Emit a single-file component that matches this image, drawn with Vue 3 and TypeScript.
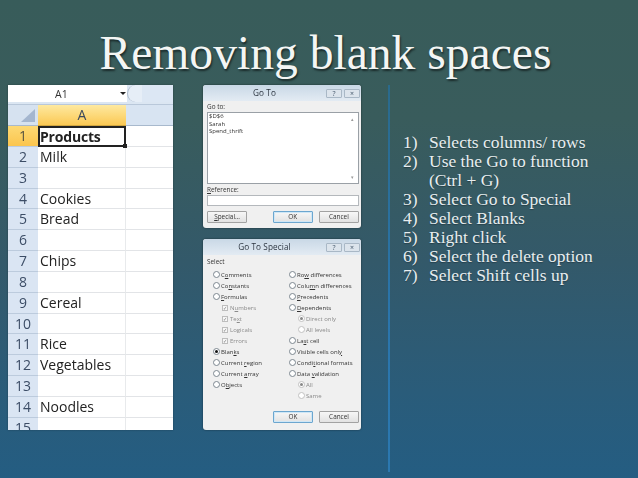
<script setup lang="ts">
interface Opt { label: string; kind: 'radio' | 'check' | 'none'; on?: boolean; sub?: boolean; off?: boolean }

const rows = ['Products', 'Milk', '', 'Cookies', 'Bread', '', 'Chips', '', 'Cereal', '', 'Rice', 'Vegetables', '', 'Noodles', '']

const steps = [
  { n: '1)', t: 'Selects columns/ rows' },
  { n: '2)', t: 'Use the Go to function' },
  { n: '', t: '(Ctrl + G)' },
  { n: '3)', t: 'Select Go to Special' },
  { n: '4)', t: 'Select Blanks' },
  { n: '5)', t: 'Right click' },
  { n: '6)', t: 'Select the delete option' },
  { n: '7)', t: 'Select Shift cells up' },
]

const left: Opt[] = [
  { label: 'C&omments', kind: 'radio' },
  { label: 'Co&nstants', kind: 'radio' },
  { label: '&Formulas', kind: 'radio' },
  { label: 'N&umbers', kind: 'check', on: true, sub: true, off: true },
  { label: 'Te&xt', kind: 'check', on: true, sub: true, off: true },
  { label: 'Lo&gicals', kind: 'check', on: true, sub: true, off: true },
  { label: 'Errors', kind: 'check', on: true, sub: true, off: true },
  { label: 'Blan&ks', kind: 'radio', on: true },
  { label: 'Current &region', kind: 'radio' },
  { label: 'Current &array', kind: 'radio' },
  { label: 'O&bjects', kind: 'radio' },
  { label: '', kind: 'none' },
]

const right: Opt[] = [
  { label: 'Ro&w differences', kind: 'radio' },
  { label: 'Colu&mn differences', kind: 'radio' },
  { label: '&Precedents', kind: 'radio' },
  { label: '&Dependents', kind: 'radio' },
  { label: 'Direct only', kind: 'radio', on: true, sub: true, off: true },
  { label: 'All levels', kind: 'radio', sub: true, off: true },
  { label: 'La&st cell', kind: 'radio' },
  { label: 'Visible cells onl&y', kind: 'radio' },
  { label: 'Condi&tional formats', kind: 'radio' },
  { label: 'Data &validation', kind: 'radio' },
  { label: 'All', kind: 'radio', on: true, sub: true, off: true },
  { label: 'Same', kind: 'radio', sub: true, off: true },
]

const special: Opt[] = left.flatMap((o, i) => [o, right[i]])

function parts(label: string): [string, string, string] {
  const i = label.indexOf('&')
  if (i < 0) return [label, '', '']
  return [label.slice(0, i), label.charAt(i + 1), label.slice(i + 2)]
}
</script>

<template>
  <div class="slide">
    <h1 class="title">Removing blank spaces</h1>
    <div class="content">
      <section class="sheet">
        <div class="formula">
          <div class="namebox"><span class="cellref">A1</span><span class="caret"></span></div>
          <div class="fxbar"><span class="fx"></span></div>
        </div>
        <div class="strip"></div>
        <div class="grid">
          <div class="corner"><svg width="17" height="15" viewBox="0 0 17 15"><path d="M15 1V14H1Z" fill="#a4b6cf" /></svg></div>
          <div class="colhead">A</div>
          <div class="colrest"></div>
          <template v-for="(r, i) in rows" :key="i">
            <div class="rowhead" :class="{ active: i === 0 }">{{ i + 1 }}</div>
            <div class="cell" :class="{ selected: i === 0 }">{{ r }}</div>
            <div class="cell rest"></div>
          </template>
        </div>
      </section>

      <div class="dialogs">
        <section class="dialog goto">
          <header class="dtitle">
            <span class="dname">Go To</span>
            <span class="wbtn help">?</span><span class="wbtn close">×</span>
          </header>
          <div class="dlabel first"><span>Go to:</span></div>
          <div class="listbox">
            <div class="entries"><div>$D$6</div><div>Sarah</div><div>Spend_thrift</div></div>
            <div class="scroll"><span>▴</span><span>▾</span></div>
          </div>
          <div class="dlabel"><u>R</u>eference:</div>
          <div class="input"></div>
          <div class="btns">
            <button class="btn"><u>S</u>pecial...</button>
            <span class="spacer"></span>
            <button class="btn default">OK</button>
            <button class="btn">Cancel</button>
          </div>
        </section>

        <section class="dialog gotospecial">
          <header class="dtitle">
            <span class="dname">Go To Special</span>
            <span class="wbtn help">?</span><span class="wbtn close">×</span>
          </header>
          <div class="dlabel sel">Select</div>
          <div class="options">
            <div v-for="(o, i) in special" :key="i" class="opt" :class="{ sub: o.sub, off: o.off }">
              <template v-if="o.kind !== 'none'">
                <span v-if="o.kind === 'radio'" class="radio" :class="{ on: o.on }"></span>
                <span v-else class="check">✓</span>
                <span>{{ parts(o.label)[0] }}<u>{{ parts(o.label)[1] }}</u>{{ parts(o.label)[2] }}</span>
              </template>
            </div>
          </div>
          <div class="btns right">
            <button class="btn default">OK</button>
            <button class="btn">Cancel</button>
          </div>
        </section>
      </div>

      <div class="rule"></div>

      <ol class="steps">
        <li v-for="(s, i) in steps" :key="i"><span class="num">{{ s.n }}</span><span>{{ s.t }}</span></li>
      </ol>
    </div>
  </div>
</template>

<style>
html, body { margin: 0; padding: 0; background: #2a5b70; }
</style>

<style scoped>
.slide {
  width: 638px;
  height: 478px;
  overflow: hidden;
  box-sizing: border-box;
  background: linear-gradient(180deg, #385c5a 0%, #395c5c 25%, #33596a 55%, #2a5c7a 82%, #245d82 100%);
}
.title {
  margin: 0;
  height: 85px;
  box-sizing: border-box;
  padding: 23px 0 0 13px;
  text-align: center;
  font: 400 47.6px/60px "Liberation Serif", serif;
  color: #f4f6f4;
  text-shadow: 1px 2px 2px rgba(0, 0, 0, .55);
  white-space: nowrap;
}
.content { display: flex; align-items: flex-start; }

/* spreadsheet */
.sheet {
  margin-left: 8px;
  width: 165px;
  height: 345px;
  flex: none;
  overflow: hidden;
  background: #fff;
  filter: blur(.4px);
  box-shadow: 0 0 2px rgba(0, 0, 0, .3);
  font-family: "Open Sans", sans-serif;
}
.formula { display: flex; height: 17px; background: #dce7f4; }
.namebox { width: 119px; background: #fff; display: flex; align-items: center; position: relative; }
.cellref { margin-left: 47px; font-size: 10.5px; color: #333; }
.caret { position: absolute; left: 112px; top: 7px; border: 3px solid transparent; border-top: 3px solid #222; border-bottom: 0; }
.fxbar { flex: 1; position: relative; }
.fx { position: absolute; left: 0; top: 0; width: 14px; height: 17px; border-left: 1px solid #aebccd; background: #e6eef7; border-radius: 10px 0 0 10px; }
.strip { height: 2px; background: #dbe6f2; border-bottom: 1px solid #b9c8da; }
.grid { display: grid; grid-template-columns: 30px 88px 47px; grid-template-rows: 21px; grid-auto-rows: 20.85px; }
.corner { background: #d6e2f0; border-bottom: 1px solid #a8b9cd; box-sizing: border-box; display: flex; align-items: center; justify-content: flex-end; padding-right: 1px; }
.colhead { background: linear-gradient(#fee9a0, #fbc954); border-bottom: 1px solid #d2a63f; box-sizing: border-box; text-align: center; color: #3c4a5c; font-size: 14px; line-height: 20px; }
.colrest { background: #d8e4f2; border-bottom: 1px solid #a8b9cd; box-sizing: border-box; }
.rowhead { background: #dae5f3; border-bottom: 1px solid #bccbdd; box-sizing: border-box; text-align: center; color: #3c4d66; font-size: 14px; line-height: 20px; }
.rowhead.active { background: linear-gradient(#fdd974, #fbc54e); color: #5a5440; }
.cell { box-sizing: border-box; border-bottom: 1px solid #e2e4e7; border-right: 1px solid #e8eaec; padding-left: 2px; font-size: 14px; line-height: 20px; color: #222; white-space: nowrap; }
.cell.rest { border-right: 0; }
.cell.selected { font-weight: 700; border: 2px solid #222; line-height: 17px; padding-left: 0; letter-spacing: -.2px; position: relative; }
.cell.selected::after { content: ""; position: absolute; right: -3px; bottom: -3px; width: 4px; height: 4px; background: #222; }

/* dialogs */
.dialogs { margin-left: 30px; width: 158px; flex: none; display: flex; flex-direction: column; gap: 11px; }
.dialog {
  box-sizing: border-box;
  background: #f0f0f0;
  border-radius: 3px;
  box-shadow: 0 0 2px rgba(0, 0, 0, .55);
  padding: 0 2px 5px;
  font-family: "Open Sans", sans-serif;
  font-size: 6.4px;
  line-height: 8px;
  color: #333;
  filter: blur(.45px);
  display: flex;
  flex-direction: column;
}
.goto { height: 143px; }
.gotospecial { height: 191px; padding-bottom: 7px; }
.dtitle { height: 16px; margin: 0 -2px; flex: none; background: linear-gradient(#c9d8e6, #e3ebf3); display: flex; align-items: center; border-radius: 3px 3px 0 0; }
.dname { flex: 1; text-align: center; font-size: 8.2px; letter-spacing: .1px; color: #2c3540; }
.wbtn { width: 16px; height: 9px; margin-right: 1px; box-sizing: border-box; border: 1px solid #a9b8c6; background: #dce4ec; font-size: 7px; line-height: 7px; text-align: center; color: #44566a; border-radius: 1px; }
.help { margin-right: 2px; }
.dlabel { margin: 1px 0 1px 2px; height: 8px; flex: none; }
.dlabel.first { margin-top: 2px; }
.listbox { height: 72px; margin: 0 0 1px 2px; width: 152px; box-sizing: border-box; border: 1px solid #9aa0a6; background: #fff; display: flex; flex: none; }
.entries { flex: 1; padding: 0 0 0 1px; line-height: 7.5px; font-size: 6px; }
.scroll { width: 7px; display: flex; flex-direction: column; justify-content: space-between; font-size: 5px; color: #999; line-height: 8px; padding: 2px 0; }
.input { height: 11px; width: 152px; margin-left: 2px; box-sizing: border-box; border: 1px solid #b4b8bc; background: #fff; flex: none; }
.btns { display: flex; gap: 6px; margin: 5px 0 0 2px; width: 152px; }
.btns.right { justify-content: flex-end; margin-top: auto; }
.spacer { width: 14px; }
.btn { width: 42px; height: 12px; padding: 0; box-sizing: border-box; border: 1px solid #a2a2a2; border-radius: 1px; background: linear-gradient(#f7f7f7, #e2e2e2); font: 6.4px/8px "Open Sans", sans-serif; color: #333; }
.gotospecial .btn { width: 40px; }
.btn.default { border-color: #6ca6cf; box-shadow: inset 0 0 0 1px #cfe7f6; }
.dlabel.sel { margin: 3px 0 3px 2px; }
.options { display: grid; grid-template-columns: 76px 1fr; grid-auto-rows: 11px; padding-left: 8px; align-items: center; font-size: 6px; }
.opt { display: flex; align-items: center; gap: 1px; white-space: nowrap; height: 11px; }
.opt.sub { padding-left: 9px; }
.opt.off { color: #8a8a8a; }
.radio { width: 7px; height: 7px; box-sizing: border-box; border: 1px solid #7d8790; border-radius: 50%; background: #fff; flex: none; position: relative; }
.radio.on::after { content: ""; position: absolute; inset: 1px; border-radius: 50%; background: #111; }
.off .radio { border-color: #c2c2c2; }
.off .radio.on::after { background: #888; }
.check { width: 6px; height: 6px; margin-right: 1px; box-sizing: border-box; border: 1px solid #bdbdbd; background: #f7f7f7; color: #777; font-size: 5px; line-height: 4px; text-align: center; flex: none; }

/* divider + list */
.rule { width: 2px; height: 387px; margin-left: 27px; flex: none; background: linear-gradient(#2a6a8c, #2a75ac 60%, #2b78b0); }
.steps {
  list-style: none;
  margin: 48px 0 0 13px;
  padding: 0;
  font: 400 17.5px/19px "Liberation Serif", serif;
  color: #e8eef0;
  text-shadow: 0 1px 1px rgba(0, 0, 0, .3);
}
.steps li { display: flex; white-space: nowrap; height: 19px; }
.num { width: 26px; flex: none; }
</style>
